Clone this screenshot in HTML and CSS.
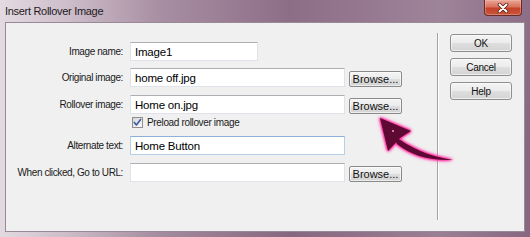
FILE: index.html
```html
<!DOCTYPE html>
<html>
<head>
<meta charset="utf-8">
<link rel="stylesheet" href="styles.css">
</head>
<body>
<div class="window">
  <div class="titlebar">
    <span class="title">Insert Rollover Image</span>
    <div class="close">
      <svg width="12" height="10" viewBox="0 0 12 10">
        <path d="M2.5 1.5 L9.5 8.5 M9.5 1.5 L2.5 8.5" stroke="#5b1c14" stroke-width="3.6" stroke-linecap="round"/>
        <path d="M2.5 1.5 L9.5 8.5 M9.5 1.5 L2.5 8.5" stroke="#ffffff" stroke-width="2" stroke-linecap="round"/>
      </svg>
    </div>
  </div>
  <div class="client">
    <div class="form">
      <div class="row r1">
        <span class="lbl">Image name:</span>
        <input class="field short" type="text" value="Image1">
      </div>
      <div class="row r2">
        <span class="lbl">Original image:</span>
        <input class="field" type="text" value="home off.jpg">
        <button class="browse">Browse...</button>
      </div>
      <div class="row r3">
        <span class="lbl">Rollover image:</span>
        <input class="field" type="text" value="Home on.jpg">
        <button class="browse">Browse...</button>
      </div>
      <div class="row check-row">
        <span class="checkbox">
          <svg width="11" height="11" viewBox="0 0 11 11">
            <path d="M2.3 5.4 L4.4 7.9 L8.6 2.4" fill="none" stroke="#3a5ca0" stroke-width="1.6" stroke-linejoin="round" stroke-linecap="round"/>
          </svg>
        </span>
        <span class="check-label">Preload rollover image</span>
      </div>
      <div class="row r5">
        <span class="lbl">Alternate text:</span>
        <input class="field focus" type="text" value="Home Button">
      </div>
      <div class="row r6">
        <span class="lbl">When clicked, Go to URL:</span>
        <input class="field" type="text" value="">
        <button class="browse">Browse...</button>
      </div>
    </div>
    <div class="sep"></div>
    <div class="actions">
      <button class="btn">OK</button>
      <button class="btn">Cancel</button>
      <button class="btn">Help</button>
    </div>
  </div>
  <svg class="arrow" width="90" height="56" viewBox="0 0 90 56">
    <path d="M10 8 L41 21 L30 28 L18 41 Z" fill="#5e0834"/>
    <path d="M22 24 C40 38 58 46 83 50 C60 51 40 45 27 34 Z" fill="#5e0834"/>
    <circle cx="23" cy="21" r="1" fill="#ff9ad0"/>
  </svg>
</div>
</body>
</html>
```

FILE: styles.css
```css
html, body {
  margin: 0;
  padding: 0;
}

body {
  width: 530px;
  height: 237px;
  overflow: hidden;
  background: #86677f;
}

.window {
  position: relative;
  width: 530px;
  height: 237px;
  box-sizing: border-box;
  display: flex;
  flex-direction: column;
  font-family: "Liberation Sans", Arial, sans-serif;
  font-size: 10px;
  color: #1a1a1a;
  background:
    linear-gradient(90deg, rgba(232, 224, 230, 0.95) 0px, rgba(220, 208, 217, 0.8) 70px, rgba(200, 182, 196, 0.45) 160px, rgba(180, 160, 176, 0) 290px, rgba(190, 172, 188, 0.35) 440px, rgba(180, 160, 176, 0) 530px),
    linear-gradient(180deg, rgba(134, 103, 127, 0) 0px, rgba(134, 103, 127, 0) 30px, #86677f 140px),
    #8d6e87;
}

.titlebar {
  flex: none;
  height: 22px;
  display: flex;
  align-items: flex-start;
}

.title {
  padding: 5px 0 0 5px;
  font-size: 11px;
  letter-spacing: -0.3px;
  line-height: 13px;
  color: #1e1a1e;
}

.close {
  margin-left: auto;
  margin-right: 8px;
  width: 38px;
  height: 16px;
  box-sizing: border-box;
  border: 1px solid #6a2c28;
  border-top: none;
  border-radius: 0 0 4px 4px;
  background: linear-gradient(180deg, #e9a796 0%, #d9725c 45%, #c5412a 55%, #c9553a 100%);
  box-shadow: inset 0 0 0 1px rgba(255, 200, 190, 0.35);
  display: flex;
  align-items: center;
  justify-content: center;
}

.client {
  flex: 1;
  margin: 0 5px 5px;
  border: 1px solid #9a8a97;
  background: #f0f0f0;
  display: flex;
}

.form {
  width: 431px;
  flex: none;
  padding-top: 19px;
  display: flex;
  flex-direction: column;
}

.row {
  display: flex;
  align-items: center;
  height: 19px;
}

.r2 { margin-top: 7px; }
.r3 { margin-top: 8px; }
.check-row { margin-top: 3px; height: 11px; padding-left: 126px; }
.r5 { margin-top: 8px; }
.r6 { margin-top: 8px; }

.lbl {
  flex: none;
  width: 117px;
  margin-right: 7px;
  text-align: right;
  white-space: nowrap;
  font-size: 10px;
  letter-spacing: -0.4px;
  color: #1a1a1a;
}

.field {
  width: 215px;
  height: 19px;
  box-sizing: border-box;
  margin: 0;
  padding: 0 4px;
  border: 1px solid #dfe3e9;
  border-top-color: #acaeb4;
  background: #ffffff;
  font-family: "Liberation Sans", Arial, sans-serif;
  font-size: 11.5px;
  letter-spacing: -0.2px;
  color: #000;
  outline: none;
}

.field.short { width: 128px; }

.field.focus {
  border-color: #b5cfe9;
  border-top-color: #8db2da;
}

.browse {
  align-self: flex-end;
  margin: 0 0 0 4px;
  width: 53px;
  height: 16px;
  box-sizing: border-box;
  padding: 0;
  border: 1px solid #8a8a8a;
  border-radius: 2px;
  background: linear-gradient(180deg, #f4f4f4 0%, #ececec 48%, #dedede 52%, #d2d2d2 100%);
  box-shadow: inset 0 0 0 1px rgba(255, 255, 255, 0.6);
  font-family: "Liberation Sans", Arial, sans-serif;
  font-size: 11px;
  line-height: 14px;
  color: #111;
}

.checkbox {
  width: 11px;
  height: 11px;
  box-sizing: border-box;
  border: 1px solid #8e8f8f;
  background: linear-gradient(135deg, #d4d4d4 0%, #eeeeee 60%, #fafafa 100%);
  display: flex;
  align-items: center;
  justify-content: center;
  overflow: hidden;
}

.checkbox svg {
  flex: none;
}

.check-label {
  margin-left: 4px;
  font-size: 10px;
  letter-spacing: -0.35px;
  white-space: nowrap;
}

.sep {
  flex: none;
  width: 1px;
  margin: 10px 0 11px;
  background: #a2a2a2;
  border-right: 1px solid #ffffff;
}

.actions {
  padding: 11px 0 0 11px;
  display: flex;
  flex-direction: column;
  gap: 6px;
}

.btn {
  width: 62px;
  height: 18px;
  box-sizing: border-box;
  margin: 0;
  padding: 0;
  border: 1px solid #8e8e8e;
  border-radius: 3px;
  background: linear-gradient(180deg, #f4f4f4 0%, #ececec 48%, #dedede 52%, #d4d4d4 100%);
  box-shadow: inset 0 0 0 1px rgba(255, 255, 255, 0.6);
  font-family: "Liberation Sans", Arial, sans-serif;
  font-size: 10px;
  letter-spacing: -0.3px;
  line-height: 15px;
  color: #111;
}

.arrow {
  position: absolute;
  left: 370px;
  top: 110px;
  filter: drop-shadow(0 0 1px #ff2a9c) drop-shadow(0 0 1px #ff2a9c) drop-shadow(0 0 1.5px #ff5ab4);
}
```
